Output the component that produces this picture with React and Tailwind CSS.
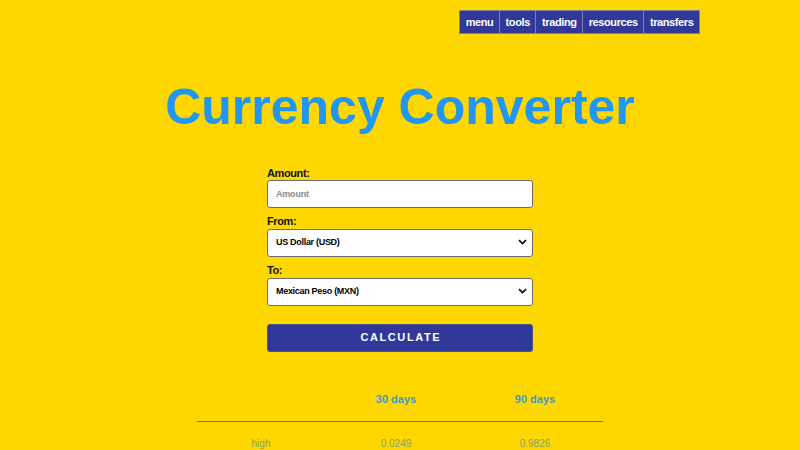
import React from "react";

const navItems = ["menu", "tools", "trading", "resources", "transfers"];

function Chevron() {
  return (
    <svg width="9" height="6" viewBox="0 0 9 6" className="pointer-events-none absolute right-[6px] top-1/2 -translate-y-1/2">
      <path d="M1 1.2 L4.5 4.6 L8 1.2" fill="none" stroke="#111" strokeWidth="1.8" />
    </svg>
  );
}

function Select({ value }) {
  return (
    <div className="relative">
      <select
        defaultValue={value}
        className="h-[28px] w-full appearance-none rounded-[3px] border border-[#6b6b6b] bg-white pl-[8px] text-[9px] font-bold tracking-[-0.3px] text-black outline-none"
      >
        <option>{value}</option>
      </select>
      <Chevron />
    </div>
  );
}

export default function App() {
  return (
    <div className="min-h-screen bg-[#FFD700] font-['Liberation_Sans',Arial,sans-serif]">
      <div className="mx-auto flex w-[600px] justify-end pt-[10px]">
        <nav className="flex text-[11px] font-bold tracking-[-0.4px] text-white">
          {navItems.map((item) => (
            <a
              key={item}
              href="#"
              className="-ml-px flex h-[24px] items-center border border-[#7d82a8] bg-[#30399a] px-[5.6px] first:ml-0"
            >
              {item}
            </a>
          ))}
        </nav>
      </div>

      <h1 className="mt-[48px] text-center text-[50px] font-bold leading-none text-[#2196F3]">
        Currency Converter
      </h1>

      <form className="mx-auto mt-[35px] flex w-[266px] flex-col">
        <label className="text-[11px] font-bold leading-[12px] tracking-[-0.4px] text-[#111]">Amount:</label>
        <input
          placeholder="Amount"
          className="mt-px h-[28px] w-full rounded-[3px] border border-[#6b6b6b] bg-white pl-[8px] text-[9px] font-bold tracking-[-0.2px] outline-none placeholder:text-[#8a8a8a]"
        />
        <label className="mt-[7px] text-[11px] font-bold leading-[12px] tracking-[-0.4px] text-[#111]">From:</label>
        <div className="mt-px">
          <Select value="US Dollar (USD)" />
        </div>
        <label className="mt-[7px] text-[11px] font-bold leading-[12px] tracking-[-0.4px] text-[#111]">To:</label>
        <div className="mt-px">
          <Select value="Mexican Peso (MXN)" />
        </div>
        <button
          type="button"
          className="mt-[18px] h-[28px] w-full rounded-[3px] border border-[#4a4f8a] bg-[#30399a] pl-[1.6px] text-[11px] font-bold tracking-[1.6px] text-white"
        >
          CALCULATE
        </button>
      </form>

      <table className="mx-auto mt-[26px] w-[406px] table-fixed border-collapse text-center">
        <thead>
          <tr className="border-b border-[#77724a]">
            <th className="h-[44px] w-[128px]"></th>
            <th className="h-[44px] w-[142px] text-[11px] font-bold text-[#3c98c6]">30 days</th>
            <th className="h-[44px] w-[136px] text-[11px] font-bold text-[#3c98c6]">90 days</th>
          </tr>
        </thead>
        <tbody>
          <tr className="text-[10px] text-[#7f9f78]">
            <td className="h-[44px]">high</td>
            <td className="h-[44px]">0.0249</td>
            <td className="h-[44px]">0.9826</td>
          </tr>
        </tbody>
      </table>
    </div>
  );
}
